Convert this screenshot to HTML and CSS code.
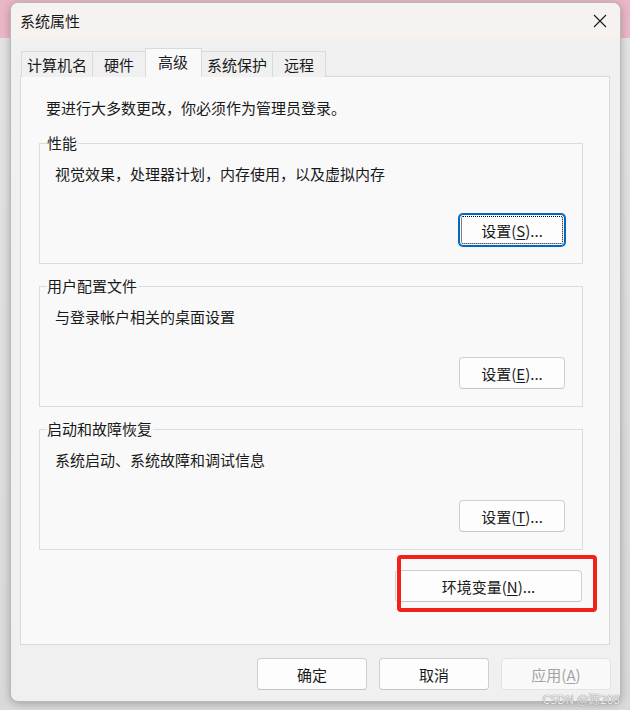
FILE: index.html
```html
<!DOCTYPE html>
<html lang="zh-CN">
<head>
    <meta charset="UTF-8">
    <title>系统属性</title>
    <link rel="stylesheet" href="styles.css">
</head>
<body>

<div class="screen">
    <div class="dialog">
        <div class="titlebar">
            <span class="title">系统属性</span>
            <span class="close">
                <svg width="14" height="14" viewBox="0 0 14 14"><path d="M1 1 L13 13 M13 1 L1 13" stroke="#1a1a1a" stroke-width="1.1" fill="none"/></svg>
            </span>
        </div>

        <div class="dialog-body">
            <div class="tabs">
                <div class="tab wide">计算机名</div>
                <div class="tab">硬件</div>
                <div class="tab active">高级</div>
                <div class="tab wide">系统保护</div>
                <div class="tab">远程</div>
            </div>

            <div class="panel">
                <p class="intro">要进行大多数更改，你必须作为管理员登录。</p>

                <fieldset class="group">
                    <legend>性能</legend>
                    <p class="desc">视觉效果，处理器计划，内存使用，以及虚拟内存</p>
                    <div class="group-actions">
                        <button class="button focused">设置(<u>S</u>)...</button>
                    </div>
                </fieldset>

                <fieldset class="group">
                    <legend>用户配置文件</legend>
                    <p class="desc">与登录帐户相关的桌面设置</p>
                    <div class="group-actions">
                        <button class="button">设置(<u>E</u>)...</button>
                    </div>
                </fieldset>

                <fieldset class="group">
                    <legend>启动和故障恢复</legend>
                    <p class="desc">系统启动、系统故障和调试信息</p>
                    <div class="group-actions">
                        <button class="button">设置(<u>T</u>)...</button>
                    </div>
                </fieldset>

                <div class="env-row">
                    <div class="highlight">
                        <button class="button env">环境变量(<u>N</u>)...</button>
                    </div>
                </div>
            </div>

            <div class="footer">
                <button class="button footer-btn">确定</button>
                <button class="button footer-btn">取消</button>
                <button class="button footer-btn" disabled>应用(<u>A</u>)</button>
            </div>
        </div>
    </div>
</div>

<div class="watermark">CSDN @源208</div>

</body>
</html>
```

FILE: styles.css
```css
body {
    margin: 0;
    width: 630px;
    height: 710px;
    overflow: hidden;
    position: relative;
    font-family: "Noto Sans CJK SC", "Noto Sans", sans-serif;
    font-size: 15px;
    color: #1a1a1a;
    background: linear-gradient(to bottom, #eab7c6 0, #eab7c6 38px, #e3e3e3 38px, #dadada 100%);
}
.screen {
    padding: 2px 9px 0 10px;
}
.dialog {
    width: 611px;
    height: 700px;
    box-sizing: border-box;
    border: 1px solid #b9b9b9;
    border-radius: 8px;
    overflow: hidden;
    background-color: #f0f0f0;
    box-shadow: 0 2px 8px rgba(0, 0, 0, 0.25);
}
.titlebar {
    height: 36px;
    background-color: #f5f2ef;
    display: flex;
    align-items: center;
    justify-content: space-between;
    padding: 0 13px 0 9px;
}
.title {
    line-height: 20px;
}
.close {
    display: flex;
}
.dialog-body {
    padding: 0 10px 0 9px;
}
.tabs {
    display: flex;
    align-items: flex-end;
    height: 28px;
    margin-top: 10px;
    padding-left: 1px;
}
.tab {
    height: 26px;
    box-sizing: border-box;
    padding: 0 11px;
    line-height: 26px;
    border: 1px solid #dadada;
    border-bottom: none;
    margin-right: -1px;
    background-color: #f0f0f0;
}
.tab.wide {
    padding: 0 5px;
}
.tab.active {
    height: 29px;
    line-height: 25px;
    padding: 0 13px 0 12px;
    margin-right: -1px;
    background-color: #f9f9f9;
    position: relative;
    z-index: 1;
}
.panel {
    width: 590px;
    height: 569px;
    box-sizing: border-box;
    margin-top: -1px;
    border: 1px solid #dadada;
    background-color: #f9f9f9;
    overflow: hidden;
}
.intro {
    margin: 21px 0 0 25px;
    line-height: 20px;
}
.group {
    margin: 15px 26px 0 18px;
    padding: 11px 17px 17px 7px;
    border: 1px solid #dcdcdc;
    min-width: 0;
}
.group + .group {
    margin-top: 12px;
}
.group legend {
    padding: 0 1px 0 0;
    line-height: 20px;
}
.desc {
    margin: 0 0 0 8px;
    line-height: 20px;
}
.group-actions {
    display: flex;
    justify-content: flex-end;
    margin-top: 30px;
}
.button {
    font-family: "Noto Sans CJK SC", "Noto Sans", sans-serif;
    font-size: 15px;
    color: #1a1a1a;
    background-color: #fdfdfd;
    border: 1px solid #d0d0d0;
    border-bottom-color: #c4c4c4;
    border-radius: 4px;
    width: 106px;
    height: 32px;
    padding: 0;
}
.button u {
    text-underline-offset: 2px;
}
.button.focused {
    border: 1px solid #0067c0;
    box-shadow: 0 0 0 1px #0067c0;
    outline: 1px dotted #000;
    outline-offset: -3px;
}
.env-row {
    display: flex;
    justify-content: flex-end;
    margin: 20px 27px 0 0;
}
.highlight {
    position: relative;
}
.highlight::after {
    content: "";
    position: absolute;
    left: 2px;
    top: -15px;
    width: 200px;
    height: 57px;
    box-sizing: border-box;
    border: 4px solid #f2211a;
    border-radius: 4px;
}
.button.env {
    width: 187px;
}
.footer {
    display: flex;
    justify-content: flex-end;
    gap: 12px;
    margin: 13px -1px 0 0;
}
.button.footer-btn {
    width: 110px;
}
.button:disabled {
    color: #a3a3a3;
    background-color: #f9f9f9;
    border-color: #e3e3e3;
}
.watermark {
    position: absolute;
    right: 10px;
    bottom: 3px;
    font-size: 12px;
    color: rgba(255, 255, 255, 0.85);
    text-shadow: 0 0 1px #8a8a8a, 0 0 1px #8a8a8a;
}
```
